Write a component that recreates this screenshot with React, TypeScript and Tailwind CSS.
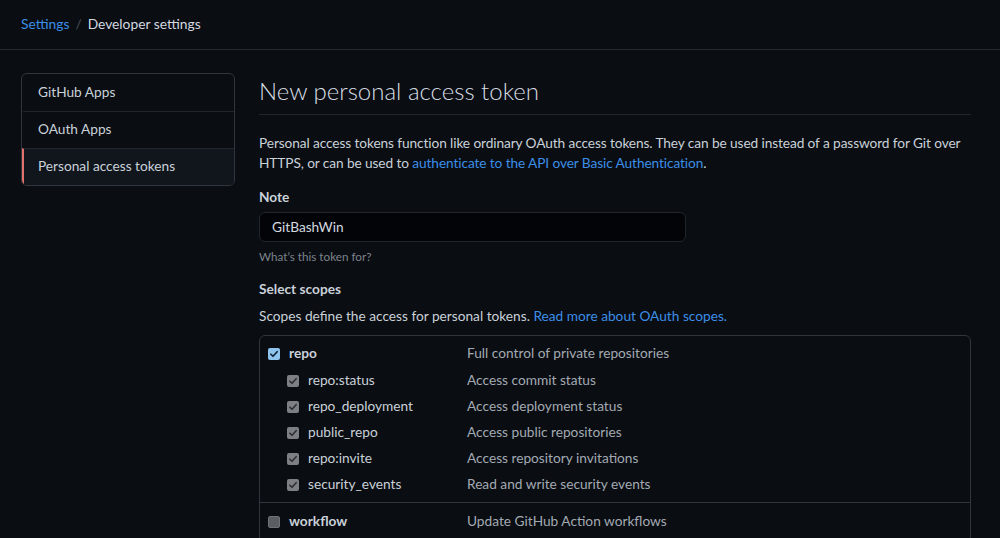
import React from 'react';

interface Scope {
    name: string;
    description: string;
}

const REPO_SCOPES: Scope[] = [
    { name: 'repo:status', description: 'Access commit status' },
    { name: 'repo_deployment', description: 'Access deployment status' },
    { name: 'public_repo', description: 'Access public repositories' },
    { name: 'repo:invite', description: 'Access repository invitations' },
    { name: 'security_events', description: 'Read and write security events' },
];

const NAV_ITEMS = ['GitHub Apps', 'OAuth Apps', 'Personal access tokens'];

const Check: React.FC<{ state: 'on' | 'sub' | 'off' }> = ({ state }) => {
    if (state === 'off') {
        return <span className="block w-[12px] h-[12px] rounded-[2px] bg-[#5a5e63] border border-[#6e7378]" />;
    }
    const bg = state === 'on' ? 'bg-[#8fc4ef]' : 'bg-[#7c7f83]';
    return (
        <span className={`flex items-center justify-center w-[12px] h-[12px] rounded-[2px] ${bg}`}>
            <svg viewBox="0 0 12 12" className="w-[10px] h-[10px]">
                <path d="M2.2 6.2 L4.8 8.8 L9.8 3.2" fill="none" stroke={state === 'on' ? '#0b1a2a' : '#2a2c2f'} strokeWidth="1.8" strokeLinecap="round" strokeLinejoin="round" />
            </svg>
        </span>
    );
};

export default function App() {
    return (
        <div className="min-h-[538px] bg-[#0a0d12] text-[#c9d1d9] text-[13.7px]" style={{ fontFamily: 'Lato, "Noto Sans", sans-serif' }}>
            {/* breadcrumbs */}
            <div className="h-[50px] border-b border-[#262a31] flex items-center px-[21px] text-[13.8px]">
                <a className="text-[#3c8ee6]">Settings</a>
                <span className="text-[#484f58] mx-[6px]">/</span>
                <span className="text-[#d3d9e0]">Developer settings</span>
            </div>

            <div className="flex pl-[21px] pr-[29px] pt-[23px] gap-[24px]">
                {/* sidebar */}
                <nav className="w-[214px] shrink-0 self-start border border-[#30363d] rounded-[6px] overflow-hidden">
                    {NAV_ITEMS.map((item, i) => {
                        const active = i === NAV_ITEMS.length - 1;
                        return (
                            <div
                                key={item}
                                className={`h-[37px] flex items-center pl-[14px] pb-[1px] border-l-2 ${
                                    i > 0 ? 'border-t border-t-[#21262d]' : ''
                                } ${active ? 'border-l-[#e2716a] bg-[#11161d]' : 'border-l-transparent'}`}
                            >
                                {item}
                            </div>
                        );
                    })}
                </nav>

                {/* main */}
                <main className="flex-1 min-w-0">
                    <h1 className="text-[24px] font-light leading-[36px] text-[#d7dde3] pb-[5px] border-b border-[#21262d]">
                        New personal access token
                    </h1>
                    <p className="mt-[18px] leading-[19.5px] tracking-[-0.1px]">
                        <span className="block whitespace-nowrap">
                            Personal access tokens function like ordinary OAuth access tokens. They can be used instead of a password for Git over
                        </span>
                        <span className="block whitespace-nowrap">
                            HTTPS, or can be used to <a className="text-[#3c8ee6]">authenticate to the API over Basic Authentication</a>.
                        </span>
                    </p>

                    <label className="block mt-[15px] font-bold leading-[20px]">Note</label>
                    <div className="mt-[5px] w-[427px] h-[30px] rounded-[6px] border border-[#21262d] bg-[#020407] flex items-center px-[12px] text-[#d3d9e0]">
                        GitBashWin
                    </div>
                    <p className="mt-[6px] text-[11.7px] text-[#7d848c]">What’s this token for?</p>

                    <h3 className="mt-[13px] font-bold leading-[20px]">Select scopes</h3>
                    <p className="mt-[7px] leading-[20px]">
                        Scopes define the access for personal tokens. <a className="text-[#3c8ee6]">Read more about OAuth scopes.</a>
                    </p>

                    <div className="mt-[9px] border border-[#30363d] rounded-[6px]">
                        <div className="pt-[4px] pb-[4px]">
                            <div className="flex items-center h-[28px]">
                                <div className="w-[29px] pl-[8px] flex items-center"><Check state="on" /></div>
                                <span className="w-[178px] font-bold">repo</span>
                                <span className="text-[#a3aab2]">Full control of private repositories</span>
                            </div>
                            {REPO_SCOPES.map(scope => (
                                <div key={scope.name} className="flex items-center h-[26px]">
                                    <div className="w-[48px] pl-[27px] flex items-center"><Check state="sub" /></div>
                                    <span className="w-[159px]">{scope.name}</span>
                                    <span className="text-[#a3aab2]">{scope.description}</span>
                                </div>
                            ))}
                        </div>
                        <div className="border-t border-[#30363d] pt-[7px] pb-[8px]">
                            <div className="flex items-center h-[24px]">
                                <div className="w-[29px] pl-[8px] flex items-center"><Check state="off" /></div>
                                <span className="w-[178px] font-bold">workflow</span>
                                <span className="text-[#a3aab2]">Update GitHub Action workflows</span>
                            </div>
                        </div>
                    </div>
                </main>
            </div>
        </div>
    );
}
